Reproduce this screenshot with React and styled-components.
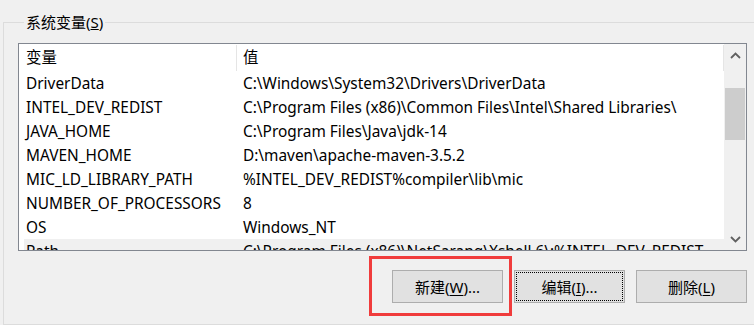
import React from "react"
import styled, { createGlobalStyle } from "styled-components"

const GlobalStyle = createGlobalStyle`
  html, body {
    margin: 0;
    background: #f0f0f0;
    overflow: hidden;
  }
  body {
    font-family: "Noto Sans", "Noto Sans CJK SC", sans-serif;
    font-size: 15px;
    color: #000;
  }
`

const variables = [
  ["DriverData", "C:\\Windows\\System32\\Drivers\\DriverData"],
  ["INTEL_DEV_REDIST", "C:\\Program Files (x86)\\Common Files\\Intel\\Shared Libraries\\"],
  ["JAVA_HOME", "C:\\Program Files\\Java\\jdk-14"],
  ["MAVEN_HOME", "D:\\maven\\apache-maven-3.5.2"],
  ["MIC_LD_LIBRARY_PATH", "%INTEL_DEV_REDIST%compiler\\lib\\mic"],
  ["NUMBER_OF_PROCESSORS", "8"],
  ["OS", "Windows_NT"],
  ["Path", "C:\\Program Files (x86)\\NetSarang\\Xshell 6\\;%INTEL_DEV_REDIST"],
]

const Chevron = ({ down }) => (
  <svg width="11" height="7" viewBox="0 0 11 7">
    <polyline
      points={down ? "1,1 5.5,5.5 10,1" : "1,6 5.5,1.5 10,6"}
      fill="none"
      stroke="#606060"
      strokeWidth="1.8"
    />
  </svg>
)

const App = () => {
  return (
    <Page>
      <GlobalStyle />
      <GroupBox>
        <Caption>
          系统变量(<u>S</u>)
        </Caption>
        <ListBox>
          <Table>
            <Header>
              <HeadCell $width={218}>变量</HeadCell>
              <HeadCell $width={487}>值</HeadCell>
            </Header>
            {variables.map(([name, value], i) => (
              <Row key={name} $selected={i === variables.length - 1}>
                <NameCell>{name}</NameCell>
                <ValueCell>{value}</ValueCell>
              </Row>
            ))}
          </Table>
          <ScrollBar>
            <ArrowButton>
              <Chevron />
            </ArrowButton>
            <Track>
              <Thumb />
            </Track>
            <ArrowButton>
              <Chevron down />
            </ArrowButton>
          </ScrollBar>
        </ListBox>
        <ButtonRow>
          <Highlight />
          <Button>
            新建(<u>W</u>)...
          </Button>
          <Button $focused>
            编辑(<u>I</u>)...
          </Button>
          <Button>
            删除(<u>L</u>)
          </Button>
        </ButtonRow>
      </GroupBox>
    </Page>
  )
}

const Page = styled.div`
  width: 754px;
  height: 325px;
  padding: 12px 0 0 3px;
  box-sizing: border-box;
  overflow: hidden;
`

const GroupBox = styled.fieldset`
  width: 770px;
  margin: 0;
  padding: 0 0 21px 14px;
  border: 1px solid #dcdcdc;
  box-sizing: border-box;
`

const Caption = styled.legend`
  margin-left: 6px;
  padding: 0 2px;
  line-height: 20px;
  height: 20px;
`

const ListBox = styled.div`
  display: flex;
  width: 729px;
  height: 208px;
  margin-top: 11px;
  border: 1px solid #828790;
  background: #fff;
  box-sizing: border-box;
  font-size: 15.4px;
`

const Table = styled.div`
  flex: 1;
  overflow: hidden;
`

const Header = styled.div`
  display: flex;
  height: 27px;
`

const HeadCell = styled.div`
  width: ${p => p.$width}px;
  height: 26px;
  margin-top: 1px;
  padding-left: 7px;
  line-height: 26px;
  border-right: 1px solid #e5e5e5;
  box-sizing: border-box;
  &:last-child {
    padding-left: 6px;
  }
`

const Row = styled.div`
  display: flex;
  height: 24px;
  padding-top: 2px;
  line-height: 22px;
  margin-left: 5px;
  white-space: nowrap;
  box-sizing: border-box;
  background: ${p => (p.$selected ? "#f0f0f0" : "transparent")};
`

const NameCell = styled.div`
  width: 212px;
  padding-left: 2px;
  box-sizing: border-box;
  overflow: hidden;
`

const ValueCell = styled.div`
  flex: 1;
  padding-left: 7px;
  overflow: hidden;
`

const ScrollBar = styled.div`
  display: flex;
  flex-direction: column;
  width: 22px;
  background: #f0f0f0;
`

const ArrowButton = styled.div`
  display: flex;
  align-items: center;
  justify-content: center;
  height: 22px;
`

const Track = styled.div`
  flex: 1;
  padding: 22px 1px 0;
`

const Thumb = styled.div`
  height: 52px;
  background: #cdcdcd;
`

const ButtonRow = styled.div`
  position: relative;
  display: flex;
  justify-content: flex-end;
  gap: 11px;
  width: 729px;
  margin-top: 19px;
`

const Button = styled.button`
  position: relative;
  width: 111px;
  height: 33px;
  padding: 0;
  border: 1px solid #adadad;
  background: #e1e1e1;
  font-family: inherit;
  font-size: 15px;
  color: #000;
  &::after {
    content: "";
    display: ${p => (p.$focused ? "block" : "none")};
    position: absolute;
    inset: 1px;
    border: 1px dotted #000;
  }
  u {
    text-underline-offset: 2px;
  }
`

const Highlight = styled.div`
  position: absolute;
  left: 351px;
  top: -14px;
  width: 143px;
  height: 60px;
  border: 3px solid #f03c3c;
  box-sizing: border-box;
  pointer-events: none;
`

export default App
